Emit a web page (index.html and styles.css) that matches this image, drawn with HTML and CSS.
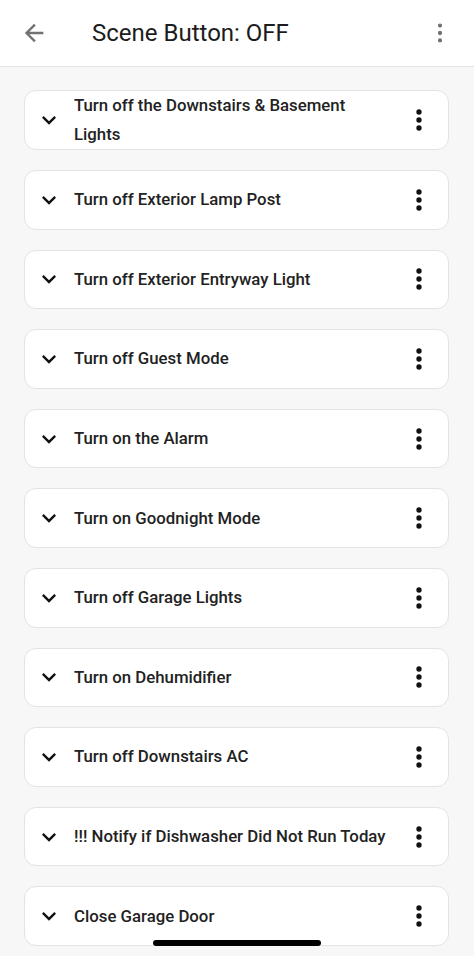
FILE: index.html
```html
<!DOCTYPE html>
<html lang="en">
<head>
  <meta charset="UTF-8">
  <meta name="viewport" content="width=device-width, initial-scale=1.0">
  <title>Scene Button: OFF</title>
  <link rel="stylesheet" href="styles.css">
</head>
<body>

<header class="toolbar">
  <button class="icon-btn back-btn" aria-label="Back">
    <svg viewBox="0 0 24 24" width="28" height="28"><path d="M20,11V13H8L13.5,18.5L12.08,19.92L4.16,12L12.08,4.08L13.5,5.5L8,11H20Z"/></svg>
  </button>
  <h1 class="title">Scene Button: OFF</h1>
  <button class="icon-btn menu-btn" aria-label="Menu">
    <svg viewBox="0 0 24 24" width="32" height="32"><path d="M12,16A1.6,1.6 0 1,1 12,19.2A1.6,1.6 0 1,1 12,16M12,10.4A1.6,1.6 0 1,1 12,13.6A1.6,1.6 0 1,1 12,10.4M12,4.8A1.6,1.6 0 1,1 12,8A1.6,1.6 0 1,1 12,4.8Z"/></svg>
  </button>
</header>

<main class="actions">
  <div class="action-row">
    <svg class="chevron" viewBox="0 0 24 24" width="28" height="28"><path d="M7.41,8.58L12,13.17L16.59,8.58L18,10L12,16L6,10L7.41,8.58Z"/></svg>
    <span class="action-name">Turn off the Downstairs &amp; Basement Lights</span>
    <svg class="dots" viewBox="0 0 24 24" width="32" height="32"><path d="M12,16A2,2 0 0,1 14,18A2,2 0 0,1 12,20A2,2 0 0,1 10,18A2,2 0 0,1 12,16M12,10A2,2 0 0,1 14,12A2,2 0 0,1 12,14A2,2 0 0,1 10,12A2,2 0 0,1 12,10M12,4A2,2 0 0,1 14,6A2,2 0 0,1 12,8A2,2 0 0,1 10,6A2,2 0 0,1 12,4Z"/></svg>
  </div>
  <div class="action-row">
    <svg class="chevron" viewBox="0 0 24 24" width="28" height="28"><path d="M7.41,8.58L12,13.17L16.59,8.58L18,10L12,16L6,10L7.41,8.58Z"/></svg>
    <span class="action-name">Turn off Exterior Lamp Post</span>
    <svg class="dots" viewBox="0 0 24 24" width="32" height="32"><path d="M12,16A2,2 0 0,1 14,18A2,2 0 0,1 12,20A2,2 0 0,1 10,18A2,2 0 0,1 12,16M12,10A2,2 0 0,1 14,12A2,2 0 0,1 12,14A2,2 0 0,1 10,12A2,2 0 0,1 12,10M12,4A2,2 0 0,1 14,6A2,2 0 0,1 12,8A2,2 0 0,1 10,6A2,2 0 0,1 12,4Z"/></svg>
  </div>
  <div class="action-row">
    <svg class="chevron" viewBox="0 0 24 24" width="28" height="28"><path d="M7.41,8.58L12,13.17L16.59,8.58L18,10L12,16L6,10L7.41,8.58Z"/></svg>
    <span class="action-name">Turn off Exterior Entryway Light</span>
    <svg class="dots" viewBox="0 0 24 24" width="32" height="32"><path d="M12,16A2,2 0 0,1 14,18A2,2 0 0,1 12,20A2,2 0 0,1 10,18A2,2 0 0,1 12,16M12,10A2,2 0 0,1 14,12A2,2 0 0,1 12,14A2,2 0 0,1 10,12A2,2 0 0,1 12,10M12,4A2,2 0 0,1 14,6A2,2 0 0,1 12,8A2,2 0 0,1 10,6A2,2 0 0,1 12,4Z"/></svg>
  </div>
  <div class="action-row">
    <svg class="chevron" viewBox="0 0 24 24" width="28" height="28"><path d="M7.41,8.58L12,13.17L16.59,8.58L18,10L12,16L6,10L7.41,8.58Z"/></svg>
    <span class="action-name">Turn off Guest Mode</span>
    <svg class="dots" viewBox="0 0 24 24" width="32" height="32"><path d="M12,16A2,2 0 0,1 14,18A2,2 0 0,1 12,20A2,2 0 0,1 10,18A2,2 0 0,1 12,16M12,10A2,2 0 0,1 14,12A2,2 0 0,1 12,14A2,2 0 0,1 10,12A2,2 0 0,1 12,10M12,4A2,2 0 0,1 14,6A2,2 0 0,1 12,8A2,2 0 0,1 10,6A2,2 0 0,1 12,4Z"/></svg>
  </div>
  <div class="action-row">
    <svg class="chevron" viewBox="0 0 24 24" width="28" height="28"><path d="M7.41,8.58L12,13.17L16.59,8.58L18,10L12,16L6,10L7.41,8.58Z"/></svg>
    <span class="action-name">Turn on the Alarm</span>
    <svg class="dots" viewBox="0 0 24 24" width="32" height="32"><path d="M12,16A2,2 0 0,1 14,18A2,2 0 0,1 12,20A2,2 0 0,1 10,18A2,2 0 0,1 12,16M12,10A2,2 0 0,1 14,12A2,2 0 0,1 12,14A2,2 0 0,1 10,12A2,2 0 0,1 12,10M12,4A2,2 0 0,1 14,6A2,2 0 0,1 12,8A2,2 0 0,1 10,6A2,2 0 0,1 12,4Z"/></svg>
  </div>
  <div class="action-row">
    <svg class="chevron" viewBox="0 0 24 24" width="28" height="28"><path d="M7.41,8.58L12,13.17L16.59,8.58L18,10L12,16L6,10L7.41,8.58Z"/></svg>
    <span class="action-name">Turn on Goodnight Mode</span>
    <svg class="dots" viewBox="0 0 24 24" width="32" height="32"><path d="M12,16A2,2 0 0,1 14,18A2,2 0 0,1 12,20A2,2 0 0,1 10,18A2,2 0 0,1 12,16M12,10A2,2 0 0,1 14,12A2,2 0 0,1 12,14A2,2 0 0,1 10,12A2,2 0 0,1 12,10M12,4A2,2 0 0,1 14,6A2,2 0 0,1 12,8A2,2 0 0,1 10,6A2,2 0 0,1 12,4Z"/></svg>
  </div>
  <div class="action-row">
    <svg class="chevron" viewBox="0 0 24 24" width="28" height="28"><path d="M7.41,8.58L12,13.17L16.59,8.58L18,10L12,16L6,10L7.41,8.58Z"/></svg>
    <span class="action-name">Turn off Garage Lights</span>
    <svg class="dots" viewBox="0 0 24 24" width="32" height="32"><path d="M12,16A2,2 0 0,1 14,18A2,2 0 0,1 12,20A2,2 0 0,1 10,18A2,2 0 0,1 12,16M12,10A2,2 0 0,1 14,12A2,2 0 0,1 12,14A2,2 0 0,1 10,12A2,2 0 0,1 12,10M12,4A2,2 0 0,1 14,6A2,2 0 0,1 12,8A2,2 0 0,1 10,6A2,2 0 0,1 12,4Z"/></svg>
  </div>
  <div class="action-row">
    <svg class="chevron" viewBox="0 0 24 24" width="28" height="28"><path d="M7.41,8.58L12,13.17L16.59,8.58L18,10L12,16L6,10L7.41,8.58Z"/></svg>
    <span class="action-name">Turn on Dehumidifier</span>
    <svg class="dots" viewBox="0 0 24 24" width="32" height="32"><path d="M12,16A2,2 0 0,1 14,18A2,2 0 0,1 12,20A2,2 0 0,1 10,18A2,2 0 0,1 12,16M12,10A2,2 0 0,1 14,12A2,2 0 0,1 12,14A2,2 0 0,1 10,12A2,2 0 0,1 12,10M12,4A2,2 0 0,1 14,6A2,2 0 0,1 12,8A2,2 0 0,1 10,6A2,2 0 0,1 12,4Z"/></svg>
  </div>
  <div class="action-row">
    <svg class="chevron" viewBox="0 0 24 24" width="28" height="28"><path d="M7.41,8.58L12,13.17L16.59,8.58L18,10L12,16L6,10L7.41,8.58Z"/></svg>
    <span class="action-name">Turn off Downstairs AC</span>
    <svg class="dots" viewBox="0 0 24 24" width="32" height="32"><path d="M12,16A2,2 0 0,1 14,18A2,2 0 0,1 12,20A2,2 0 0,1 10,18A2,2 0 0,1 12,16M12,10A2,2 0 0,1 14,12A2,2 0 0,1 12,14A2,2 0 0,1 10,12A2,2 0 0,1 12,10M12,4A2,2 0 0,1 14,6A2,2 0 0,1 12,8A2,2 0 0,1 10,6A2,2 0 0,1 12,4Z"/></svg>
  </div>
  <div class="action-row">
    <svg class="chevron" viewBox="0 0 24 24" width="28" height="28"><path d="M7.41,8.58L12,13.17L16.59,8.58L18,10L12,16L6,10L7.41,8.58Z"/></svg>
    <span class="action-name">!!! Notify if Dishwasher Did Not Run Today</span>
    <svg class="dots" viewBox="0 0 24 24" width="32" height="32"><path d="M12,16A2,2 0 0,1 14,18A2,2 0 0,1 12,20A2,2 0 0,1 10,18A2,2 0 0,1 12,16M12,10A2,2 0 0,1 14,12A2,2 0 0,1 12,14A2,2 0 0,1 10,12A2,2 0 0,1 12,10M12,4A2,2 0 0,1 14,6A2,2 0 0,1 12,8A2,2 0 0,1 10,6A2,2 0 0,1 12,4Z"/></svg>
  </div>
  <div class="action-row">
    <svg class="chevron" viewBox="0 0 24 24" width="28" height="28"><path d="M7.41,8.58L12,13.17L16.59,8.58L18,10L12,16L6,10L7.41,8.58Z"/></svg>
    <span class="action-name">Close Garage Door</span>
    <svg class="dots" viewBox="0 0 24 24" width="32" height="32"><path d="M12,16A2,2 0 0,1 14,18A2,2 0 0,1 12,20A2,2 0 0,1 10,18A2,2 0 0,1 12,16M12,10A2,2 0 0,1 14,12A2,2 0 0,1 12,14A2,2 0 0,1 10,12A2,2 0 0,1 12,10M12,4A2,2 0 0,1 14,6A2,2 0 0,1 12,8A2,2 0 0,1 10,6A2,2 0 0,1 12,4Z"/></svg>
  </div>
</main>

<div class="home-indicator"></div>

</body>
</html>
```

FILE: styles.css
```css
:root {
  --bg-page: #f7f7f7;
  --bg-card: #ffffff;
  --border-color: #e3e3e3;
  --text-primary: #1c1c1c;
  --icon-secondary: #727272;
}

* {
  box-sizing: border-box;
}

html, body {
  height: 100%;
}

body {
  font-family: Roboto, "Noto Sans", sans-serif;
  background-color: var(--bg-page);
  color: var(--text-primary);
  margin: 0;
  padding: 0;
  overflow: hidden;
}

.toolbar {
  display: flex;
  align-items: center;
  height: 67px;
  padding: 0 18px 0 20px;
  background-color: #ffffff;
  border-bottom: 1px solid #e4e4e4;
}

.icon-btn {
  display: flex;
  align-items: center;
  justify-content: center;
  padding: 0;
  background: none;
  border: none;
  cursor: pointer;
}

.icon-btn svg {
  fill: var(--icon-secondary);
}

.title {
  flex: 1;
  margin: 0 0 0 44px;
  font-size: 24px;
  font-weight: 400;
  line-height: 66px;
  color: var(--text-primary);
}

.actions {
  display: flex;
  flex-direction: column;
  gap: 20px;
  padding: 23px 25px 0 24px;
}

.action-row {
  display: flex;
  align-items: center;
  min-height: 59.6px;
  padding: 0 13px 0 10px;
  background-color: var(--bg-card);
  border: 1px solid var(--border-color);
  border-radius: 12px;
}

.chevron {
  flex-shrink: 0;
  fill: #111111;
}

.action-name {
  flex: 1;
  margin: 0 8px 0 11px;
  font-size: 16.8px;
  font-weight: 500;
  line-height: 29px;
  color: #222222;
}

.dots {
  flex-shrink: 0;
  fill: #111111;
}

.home-indicator {
  position: fixed;
  left: 153px;
  bottom: 10px;
  width: 168px;
  height: 6px;
  border-radius: 3px;
  background-color: #000000;
}
```
